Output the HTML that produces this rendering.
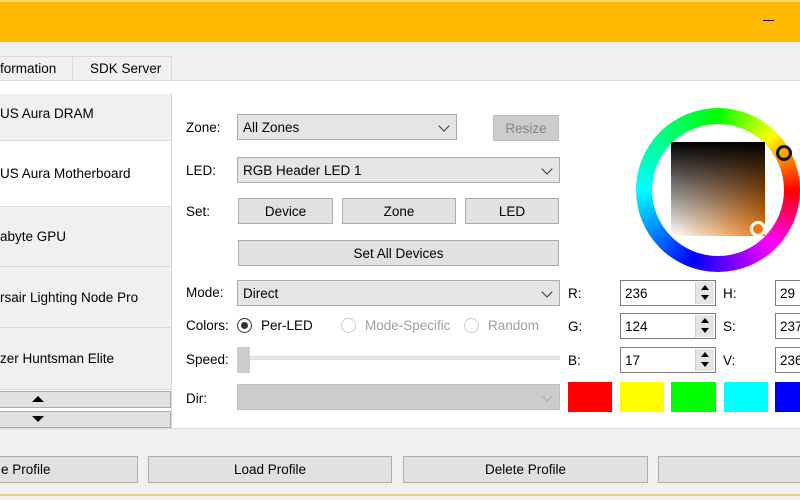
<!DOCTYPE html><html><head><style>
body{margin:0;width:800px;height:500px;overflow:hidden;background:#f0f0f0;font-family:"Liberation Sans",sans-serif;font-size:13.5px;color:#000;position:relative}
.a{position:absolute;box-sizing:border-box}
.btn{position:absolute;box-sizing:border-box;background:#e1e1e1;border:1px solid #adadad;text-align:center;display:flex;align-items:center;justify-content:center}
.cb{position:absolute;box-sizing:border-box;background:#e5e5e5;border:1px solid #acacac;padding-left:5px;display:flex;align-items:center}
.chev{position:absolute;right:8px;top:7px;width:7px;height:7px;border-right:1.3px solid #333;border-bottom:1.3px solid #333;transform:rotate(45deg)}
.lbl{position:absolute}
.item{position:absolute;left:0;width:171px;box-sizing:border-box;background:#f0f0f0;border-bottom:1px solid #d8d8d8;padding-top:0;display:flex;align-items:center}
.spin{position:absolute;box-sizing:border-box;background:#fff;border:1px solid #7a7a7a;padding-left:4px;display:flex;align-items:center;width:96px;height:26px}
.sb{position:absolute;right:1px;top:1px;width:18px;height:22px;background:#e5e5e5;border-left:1px solid #ccc}
.sb:before{content:"";position:absolute;left:5px;top:3px;border:4px solid transparent;border-bottom:5px solid #000;border-top:0}
.sb:after{content:"";position:absolute;left:5px;top:13px;border:4px solid transparent;border-top:5px solid #000;border-bottom:0}
</style></head><body>
<div class="a" style="left:0;top:0;width:800px;height:42px;background:#ffb900;border-top:2px solid #f8d77a"></div>
<div class="a" style="left:763px;top:20px;width:11px;height:1px;background:#000"></div>
<div class="a" style="left:0;top:56px;width:73px;height:25px;border:1px solid #d9d9d9;border-left:0;background:#f0f0f0;padding:4px 0 0 0">formation</div>
<div class="a" style="left:72px;top:56px;width:100px;height:25px;border:1px solid #d9d9d9;background:#f0f0f0;padding:4px 0 0 17px">SDK Server</div>
<div class="a" style="left:0;top:80px;width:800px;height:349px;background:#fff;border-top:1px solid #d9d9d9;border-bottom:1px solid #d9d9d9"></div>
<div class="a" style="left:171px;top:93px;width:1px;height:336px;background:#d9d9d9"></div>
<div class="item" style="top:94px;height:47px;align-items:flex-start;padding-top:12px">US Aura DRAM</div>
<div class="item" style="top:141px;height:66px;background:#fff">US Aura Motherboard</div>
<div class="item" style="top:207px;height:60px">abyte GPU</div>
<div class="item" style="top:267px;height:61px">rsair Lighting Node Pro</div>
<div class="item" style="top:328px;height:62px">zer Huntsman Elite</div>
<div class="a" style="left:0;top:391px;width:171px;height:17px;background:#e1e1e1;border:1px solid #adadad;border-left:0"><div class="a" style="left:32px;top:4px;border:6px solid transparent;border-bottom:6px solid #000;border-top:0"></div></div>
<div class="a" style="left:0;top:411px;width:171px;height:17px;background:#e1e1e1;border:1px solid #adadad;border-left:0"><div class="a" style="left:32px;top:4px;border:6px solid transparent;border-top:6px solid #000;border-bottom:0"></div></div>
<div class="lbl" style="left:186px;top:120px">Zone:</div>
<div class="cb" style="left:237px;top:114px;width:220px;height:26px">All Zones<div class="chev"></div></div>
<div class="btn" style="left:493px;top:115px;width:66px;height:26px;color:#838383;background:#ccc;border-color:#bfbfbf">Resize</div>
<div class="lbl" style="left:186px;top:163px">LED:</div>
<div class="cb" style="left:237px;top:157px;width:323px;height:26px">RGB Header LED 1<div class="chev"></div></div>
<div class="lbl" style="left:186px;top:204px">Set:</div>
<div class="btn" style="left:238px;top:198px;width:95px;height:26px">Device</div>
<div class="btn" style="left:342px;top:198px;width:114px;height:26px">Zone</div>
<div class="btn" style="left:465px;top:198px;width:94px;height:26px">LED</div>
<div class="btn" style="left:238px;top:240px;width:321px;height:26px">Set All Devices</div>
<div class="lbl" style="left:186px;top:285px">Mode:</div>
<div class="cb" style="left:237px;top:280px;width:323px;height:26px">Direct<div class="chev"></div></div>
<div class="lbl" style="left:186px;top:318px">Colors:</div>
<div class="a" style="left:237px;top:318px;width:15px;height:15px;border:1px solid #333;border-radius:50%"><div class="a" style="left:3px;top:3px;width:7px;height:7px;border-radius:50%;background:#333"></div></div>
<div class="lbl" style="left:261px;top:318px">Per-LED</div>
<div class="a" style="left:341px;top:318px;width:15px;height:15px;border:1px solid #ccc;border-radius:50%"></div>
<div class="lbl" style="left:365px;top:318px;color:#a0a0a0">Mode-Specific</div>
<div class="a" style="left:464px;top:318px;width:15px;height:15px;border:1px solid #ccc;border-radius:50%"></div>
<div class="lbl" style="left:488px;top:318px;color:#a0a0a0">Random</div>
<div class="lbl" style="left:186px;top:352px">Speed:</div>
<div class="a" style="left:237px;top:356px;width:323px;height:4px;background:#e7e7e7;border:1px solid #ddd"></div>
<div class="a" style="left:237px;top:347px;width:13px;height:26px;background:#ccc"></div>
<div class="lbl" style="left:186px;top:391px">Dir:</div>
<div class="cb" style="left:237px;top:384px;width:323px;height:26px;background:#ccc;border-color:#bfbfbf"><div class="chev" style="border-color:#aaa"></div></div>
<div class="lbl" style="left:568px;top:286px">R:</div><div class="spin" style="left:620px;top:280px">236<div class="sb"></div></div>
<div class="lbl" style="left:568px;top:319px">G:</div><div class="spin" style="left:620px;top:313px">124<div class="sb"></div></div>
<div class="lbl" style="left:568px;top:353px">B:</div><div class="spin" style="left:620px;top:347px">17<div class="sb"></div></div>
<div class="lbl" style="left:723px;top:286px">H:</div><div class="spin" style="left:775px;top:280px">29</div>
<div class="lbl" style="left:723px;top:319px">S:</div><div class="spin" style="left:775px;top:313px">237</div>
<div class="lbl" style="left:723px;top:353px">V:</div><div class="spin" style="left:775px;top:347px">236</div>
<div class="a" style="left:568px;top:382px;width:44px;height:30px;background:#f00"></div>
<div class="a" style="left:620px;top:382px;width:44px;height:30px;background:#ff0"></div>
<div class="a" style="left:671px;top:382px;width:45px;height:30px;background:#0f0"></div>
<div class="a" style="left:724px;top:382px;width:44px;height:30px;background:#0ff"></div>
<div class="a" style="left:775px;top:382px;width:30px;height:30px;background:#00f"></div>
<div class="a" style="left:636px;top:108px;width:164px;height:164px;border-radius:50%;background:conic-gradient(from 0deg,#0f0,#ff0 45deg,#f00 90deg,#f0f 135deg,#00f 200deg,#0ff 270deg,#0f0 360deg)"></div>
<div class="a" style="left:652px;top:124px;width:132px;height:132px;border-radius:50%;background:#fff"></div>
<div class="a" style="left:671px;top:142px;width:94px;height:94px;background:linear-gradient(to top,rgba(0,0,0,0),#000),linear-gradient(to right,#fff,#ec7c11)"></div>
<div class="a" style="left:750px;top:221px;width:16px;height:16px;border-radius:50%;background:#ec7c11;border:3px solid #fff"></div>
<div class="a" style="left:776px;top:145px;width:16px;height:16px;border-radius:50%;border:3px solid #111"></div>
<div class="btn" style="left:-10px;top:456px;width:148px;height:27px;justify-content:flex-start;padding-left:10px">e Profile</div>
<div class="btn" style="left:148px;top:456px;width:244px;height:27px">Load Profile</div>
<div class="btn" style="left:403px;top:456px;width:245px;height:27px">Delete Profile</div>
<div class="btn" style="left:658px;top:456px;width:150px;height:27px"></div>
<div class="a" style="left:0;top:494px;width:800px;height:6px;background:#f0f0f0;border-top:2px solid #e8cf8a"></div>
</body></html>
